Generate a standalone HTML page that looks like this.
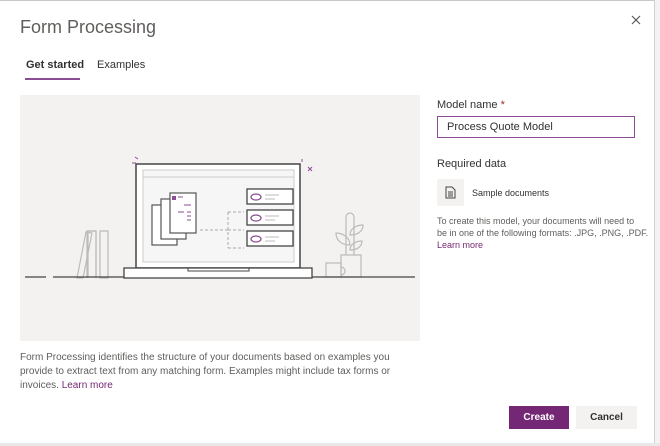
<!DOCTYPE html>
<html><head><style>
body{margin:0;width:660px;height:446px;background:#fff;font-family:"Liberation Sans",sans-serif;position:relative;overflow:hidden;color:#323130}
.t{position:absolute;white-space:nowrap}
</style></head><body>
<div style="position:absolute;left:0;top:0;width:660px;height:1px;background:#c8c8c8"></div>
<div style="position:absolute;left:654px;top:0;width:6px;height:446px;background:#f3f3f3;border-left:1px solid #d0d0d0"></div>
<div style="position:absolute;left:0;top:443px;width:660px;height:3px;background:#e8e8e8"></div>
<div class="t" style="left:20px;top:17px;font-size:18px;color:#605e5c">Form Processing</div>
<svg style="position:absolute;left:631px;top:15px" width="10" height="10"><path d="M1 1L9 9M9 1L1 9" stroke="#605e5c" stroke-width="1.2"/></svg>
<div class="t" style="left:26px;top:59px;font-size:11px;font-weight:bold">Get started</div>
<div class="t" style="left:97px;top:59px;font-size:11px">Examples</div>
<div style="position:absolute;left:25px;top:78px;width:55px;height:2px;background:#8b4d93"></div>
<div style="position:absolute;left:20px;top:95px;width:400px;height:246px;background:#f3f2f1"></div>
<svg style="position:absolute;left:20px;top:95px" width="400" height="246" fill="none">
<g stroke="#bbb" stroke-width="1.2">
<path d="M57 183L66 137L72 138L63 183Z"/><path d="M67 183V136H76V183M80 183V136H88V183Z"/><path d="M68 183V136H76V183"/>
<path d="M326 160V122a4 4 0 0 1 8 0V160"/><path d="M330 150c-10 0-14-6-14-12 6 0 14 4 14 12zM330 140c8 0 13-4 13-10-6 0-13 3-13 10zM330 155c8 0 12-4 12-9-6 0-12 3-12 9z"/>
<path d="M321 160h20v22h-20z"/><path d="M306 168h15v14h-15zM321 172a4 4 0 0 1 0 8"/>
</g>
<path d="M5 182H26M33 182H395" stroke="#444" stroke-width="1.2"/>
<rect x="116" y="69" width="164" height="104" fill="#fff" stroke="#444" stroke-width="1.5"/>
<rect x="123" y="75" width="151" height="92" fill="#f6f6f6" stroke="#ccc"/>
<path d="M123 82H274" stroke="#ccc"/>
<rect x="104" y="173" width="188" height="10" fill="#fff" stroke="#444" stroke-width="1.3"/>
<path d="M168 173v3h61v-3" stroke="#444"/>
<path d="M112 68h4M115 62l3 2M282 64v3M288 72l4 4M292 72l-4 4" stroke="#8b4d93"/>
<g stroke="#555" stroke-width="1.2" fill="#fff">
<rect x="132" y="110" width="25" height="40"/><rect x="141" y="104" width="25" height="40"/><rect x="150" y="98" width="26" height="40"/>
</g>
<rect x="152" y="101" width="4" height="4" fill="#8b4d93"/><path d="M158 102h5M164 110h7M158 117h6M167 117h4M167 121h4M167 125h4" stroke="#8b4d93"/>
<path d="M180 135h28M208 117v36M208 117h16M208 135h16M208 153h16" stroke="#aaa" stroke-dasharray="3 2"/>
<g stroke="#444" stroke-width="1.3" fill="#fff"><rect x="227" y="94" width="46" height="15"/><rect x="227" y="115" width="46" height="15"/><rect x="227" y="136" width="46" height="15"/></g>
<g stroke="#8b4d93" stroke-width="1.3"><ellipse cx="236" cy="102" rx="5" ry="3"/><ellipse cx="236" cy="123" rx="5" ry="3"/><ellipse cx="236" cy="144" rx="5" ry="3"/></g>
<path d="M245 100h14M245 104h10M245 121h14M245 125h10M245 142h14M245 146h10" stroke="#bbb"/>
</svg>
<div class="t" style="left:437px;top:99px;font-size:11px">Model name <span style="color:#a4262c">*</span></div>
<div style="position:absolute;left:437px;top:116px;width:198px;height:22px;border:1px solid #8b4d93;box-sizing:border-box"></div>
<div class="t" style="left:447px;top:121px;font-size:11px">Process Quote Model</div>
<div class="t" style="left:437px;top:158px;font-size:11px">Required data</div>
<div style="position:absolute;left:437px;top:179px;width:27px;height:27px;background:#f3f2f1;border-radius:2px"></div>
<svg style="position:absolute;left:445px;top:186px" width="11" height="13" fill="none" stroke="#444"><path d="M1 1h6l3 3v8H1z M3 6h5M3 8h5M3 10h5"/></svg>
<div class="t" style="left:472px;top:188px;font-size:9px">Sample documents</div>
<div class="t" style="left:437px;top:215px;font-size:9px;line-height:12px;color:#605e5c">To create this model, your documents will need to<br>be in one of the following formats: .JPG, .PNG, .PDF.<br><span style="color:#742774">Learn more</span></div>
<div class="t" style="left:20px;top:351px;font-size:10px;line-height:14px;color:#605e5c">Form Processing identifies the structure of your documents based on examples you<br>provide to extract text from any matching form. Examples might include tax forms or<br>invoices. <span style="color:#742774">Learn more</span></div>
<div style="position:absolute;left:509px;top:406px;width:60px;height:23px;background:#742774;color:#fff;font-size:10px;font-weight:bold;text-align:center;line-height:23px">Create</div>
<div style="position:absolute;left:576px;top:406px;width:61px;height:23px;background:#f3f2f1;color:#323130;font-size:10px;font-weight:bold;text-align:center;line-height:23px">Cancel</div>
</body></html>
